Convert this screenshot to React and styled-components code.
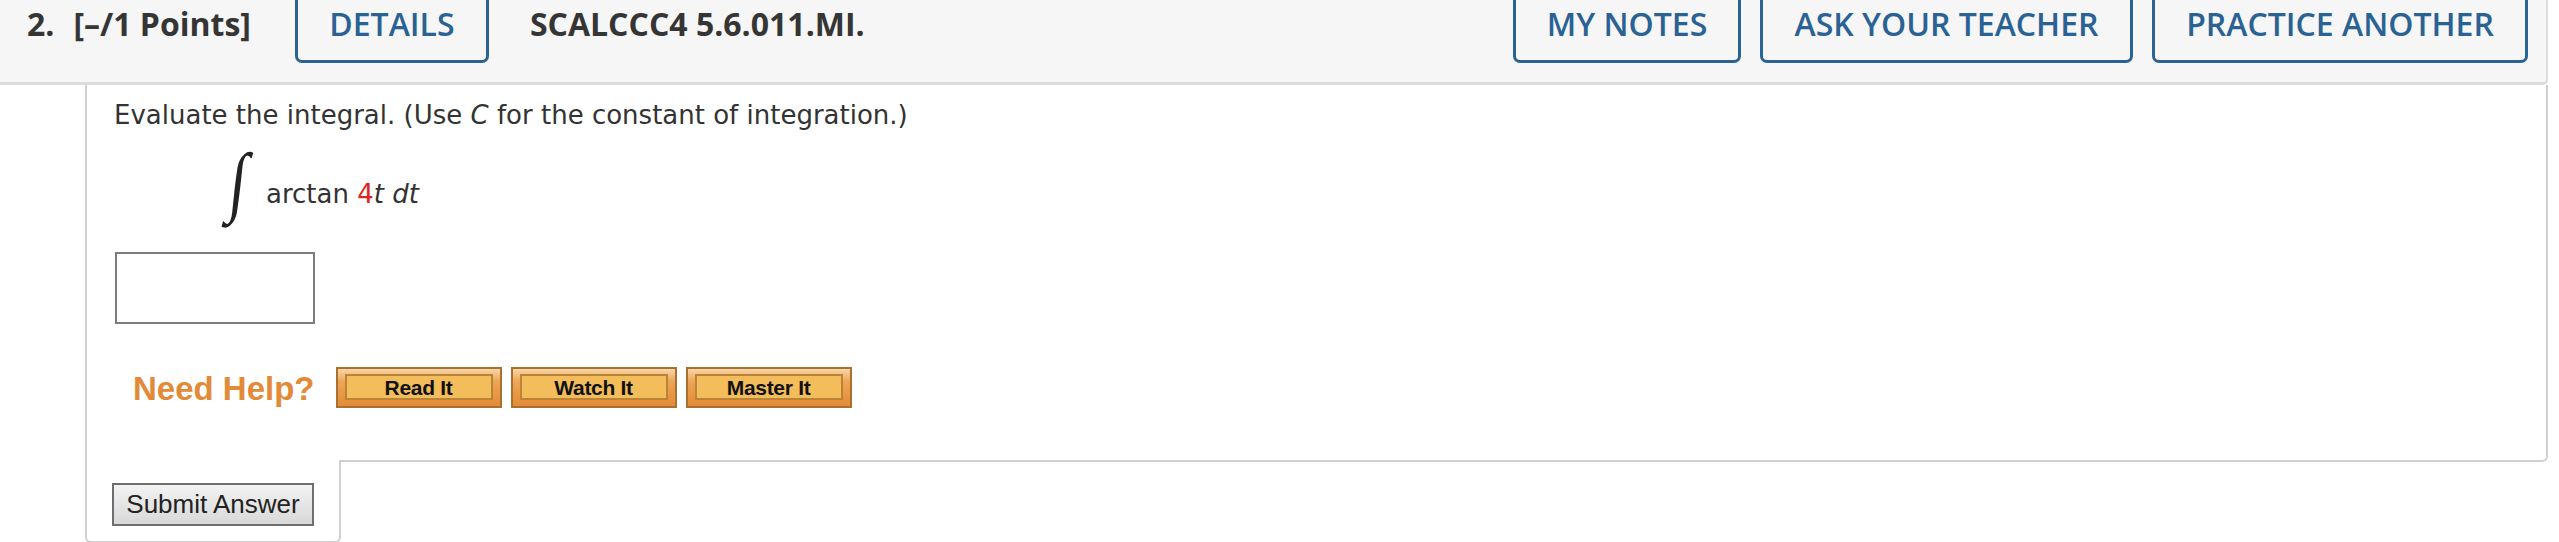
import React from "react";
import styled, { createGlobalStyle } from "styled-components";

const GlobalStyle = createGlobalStyle`
  html, body {
    margin: 0;
    padding: 0;
    background: #fff;
  }
  body {
    font-family: "DejaVu Sans", Verdana, sans-serif;
    color: #333;
  }
`;

const BLUE = "#2a6294";
const LINE = "#d0d0d0";

const Page = styled.div`
  width: 2548px;
`;

const Header = styled.header`
  display: flex;
  align-items: flex-start;
  box-sizing: border-box;
  height: 85px;
  background: #f6f6f6;
  border-bottom: 3px solid #dcdcdc;
  border-right: 2px solid #dcdcdc;
  border-bottom-right-radius: 5px;
  font-family: "Open Sans", "Liberation Sans", sans-serif;
`;

const HeadText = styled.span`
  font-size: 32px;
  font-weight: 700;
  line-height: 47px;
  color: #353535;
  margin-left: ${(p) => p.$ml}px;
  white-space: nowrap;
`;

const HeadButton = styled.button`
  box-sizing: border-box;
  height: 63px;
  width: ${(p) => p.$w}px;
  margin-left: ${(p) => p.$ml || 0}px;
  padding: 0 0 16px;
  border: 3px solid ${BLUE};
  border-top: none;
  border-radius: 0 0 7px 7px;
  background: transparent;
  font-family: "Open Sans", "Liberation Sans", sans-serif;
  font-size: 32px;
  font-weight: 600;
  line-height: 47px;
  color: ${BLUE};
  white-space: nowrap;
`;

const HeadRight = styled.div`
  display: flex;
  gap: 19px;
  margin-left: auto;
  margin-right: 18px;
`;

const Card = styled.section`
  box-sizing: border-box;
  margin-left: 85px;
  height: 377px;
  padding: 15px 0 0 27px;
  border: 2px solid ${LINE};
  border-top: none;
  border-bottom-right-radius: 6px;
  display: flex;
  flex-direction: column;
  align-items: flex-start;
`;

const Prompt = styled.p`
  margin: 0;
  font-size: 26px;
  line-height: 30px;
  color: #333;
`;

const Var = styled.i`
  font-style: italic;
`;

const IntegralRow = styled.div`
  display: flex;
  align-items: center;
  margin: 22px 0 0 112px;
  height: 76px;
`;

const IntegralSign = styled.span`
  display: block;
  width: 30px;
  font-family: "Liberation Serif", "DejaVu Serif", serif;
  font-size: 62px;
  line-height: 76px;
  color: #222;
  transform: translate(4px, -9px) scaleY(1.25) skewX(-8deg);
`;

const Expr = styled.span`
  margin-left: 10px;
  margin-top: 8px;
  font-size: 26px;
  line-height: 30px;
  color: #333;
`;

const Red = styled.span`
  color: #e2231a;
`;

const AnswerBox = styled.input`
  box-sizing: border-box;
  width: 200px;
  height: 72px;
  margin: 24px 0 0 1px;
  border: 2px solid #7d7d7d;
  background: #fff;
`;

const HelpRow = styled.div`
  display: flex;
  align-items: center;
  margin: 42px 0 0 19px;
`;

const NeedHelp = styled.span`
  font-family: "Liberation Sans", Arial, sans-serif;
  font-weight: 700;
  font-size: 33px;
  color: #e38a38;
  margin-right: 21px;
  margin-top: 4px;
`;

const HelpButtons = styled.div`
  display: flex;
  gap: 9px;
`;

const HelpButton = styled.button`
  box-sizing: border-box;
  width: 166px;
  height: 41px;
  padding: 5px 7px 6px;
  border: 2px solid #a8712f;
  background: linear-gradient(#f7d6a6 0%, #eda455 35%, #e48b36 100%);
  cursor: pointer;
`;

const HelpInner = styled.span`
  display: flex;
  align-items: center;
  justify-content: center;
  box-sizing: border-box;
  height: 100%;
  padding-top: 2px;
  border: 2px solid #b98438;
  background: #f2bd5a;
  font-family: "Liberation Sans", Arial, sans-serif;
  font-weight: 700;
  font-size: 21px;
  letter-spacing: -0.3px;
  color: #111;
`;

const Tab = styled.div`
  box-sizing: border-box;
  width: 256px;
  margin: -2px 0 0 85px;
  padding: 23px 24px 15px 25px;
  background: #fff;
  border: 2px solid ${LINE};
  border-top: none;
  border-radius: 0 0 6px 6px;
`;

const SubmitButton = styled.button`
  box-sizing: border-box;
  width: 202px;
  height: 43px;
  padding: 0;
  border: 2px solid #6e6e6e;
  background: linear-gradient(#f3f3f3, #d8d8d8);
  font-family: "Liberation Sans", Arial, sans-serif;
  font-size: 26px;
  color: #222;
`;

export default function App() {
  return (
    <Page>
      <GlobalStyle />
      <Header>
        <HeadText $ml={27}>2.</HeadText>
        <HeadText $ml={19}>[–/1 Points]</HeadText>
        <HeadButton $ml={44} $w={194}>DETAILS</HeadButton>
        <HeadText $ml={41}>SCALCCC4 5.6.011.MI.</HeadText>
        <HeadRight>
          <HeadButton $w={228}>MY NOTES</HeadButton>
          <HeadButton $w={373}>ASK YOUR TEACHER</HeadButton>
          <HeadButton $w={376}>PRACTICE ANOTHER</HeadButton>
        </HeadRight>
      </Header>
      <Card>
        <Prompt>
          Evaluate the integral. (Use <Var>C</Var> for the constant of integration.)
        </Prompt>
        <IntegralRow>
          <IntegralSign>∫</IntegralSign>
          <Expr>
            arctan <Red>4</Red>
            <Var>t dt</Var>
          </Expr>
        </IntegralRow>
        <AnswerBox type="text" aria-label="answer" />
        <HelpRow>
          <NeedHelp>Need Help?</NeedHelp>
          <HelpButtons>
            <HelpButton><HelpInner>Read It</HelpInner></HelpButton>
            <HelpButton><HelpInner>Watch It</HelpInner></HelpButton>
            <HelpButton><HelpInner>Master It</HelpInner></HelpButton>
          </HelpButtons>
        </HelpRow>
      </Card>
      <Tab>
        <SubmitButton>Submit Answer</SubmitButton>
      </Tab>
    </Page>
  );
}
